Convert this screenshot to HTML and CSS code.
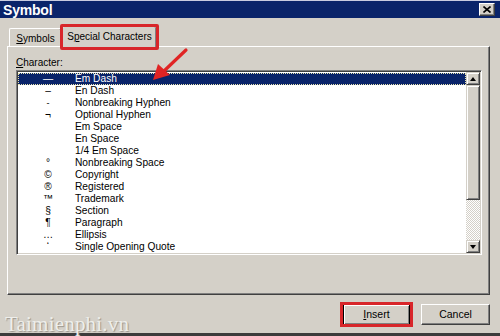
FILE: index.html
```html
<!DOCTYPE html>
<html>
<head>
<meta charset="utf-8">
<link rel="stylesheet" href="styles.css">
</head>
<body>
<div class="window">
  <div class="titlebar">
    <span class="title">Symbol</span>
    <span class="close"><svg width="8" height="7" viewBox="0 0 8 7"><path d="M0.5 0.5 L7.5 6.5 M7.5 0.5 L0.5 6.5" stroke="#000" stroke-width="1.6"/></svg></span>
  </div>
  <div class="content">
    <div class="tabs">
      <div class="tab"><u>S</u>ymbols</div>
      <div class="tab active">S<u>p</u>ecial Characters</div>
    </div>
    <div class="panel">
      <div class="label"><u>C</u>haracter:</div>
      <div class="listbox">
        <div class="rows">
          <div class="row sel"><span class="sym">—</span><span class="name">Em Dash</span></div>
          <div class="row"><span class="sym">–</span><span class="name">En Dash</span></div>
          <div class="row"><span class="sym small">-</span><span class="name">Nonbreaking Hyphen</span></div>
          <div class="row"><span class="sym">¬</span><span class="name">Optional Hyphen</span></div>
          <div class="row"><span class="sym"></span><span class="name">Em Space</span></div>
          <div class="row"><span class="sym"></span><span class="name">En Space</span></div>
          <div class="row"><span class="sym"></span><span class="name">1/4 Em Space</span></div>
          <div class="row"><span class="sym">°</span><span class="name">Nonbreaking Space</span></div>
          <div class="row"><span class="sym">©</span><span class="name">Copyright</span></div>
          <div class="row"><span class="sym">®</span><span class="name">Registered</span></div>
          <div class="row"><span class="sym">™</span><span class="name">Trademark</span></div>
          <div class="row"><span class="sym">§</span><span class="name">Section</span></div>
          <div class="row"><span class="sym">¶</span><span class="name">Paragraph</span></div>
          <div class="row"><span class="sym">…</span><span class="name">Ellipsis</span></div>
          <div class="row"><span class="sym">‘</span><span class="name">Single Opening Quote</span></div>
        </div>
        <div class="scrollbar">
          <div class="sbtn"><span class="tri up"></span></div>
          <div class="thumb"></div>
          <div class="track"></div>
          <div class="sbtn"><span class="tri down"></span></div>
        </div>
      </div>
    </div>
  </div>
  <div class="footer">
    <div class="btn default"><u>I</u>nsert</div>
    <div class="btn">Cancel</div>
  </div>
  <div class="strip"></div>
  <div class="watermark">Taimienphi.vn</div>
  <svg class="arrow" width="500" height="336" viewBox="0 0 500 336">
    <path d="M186 50 L164 71" stroke="#e02424" stroke-width="3.2" stroke-linecap="round"/>
    <polygon points="153,80 158,64 170,75" fill="#e02424"/>
  </svg>
</div>
</body>
</html>
```
FILE: styles.css
```css
* { box-sizing: border-box; }
html, body { margin: 0; padding: 0; }
body {
  width: 500px;
  height: 336px;
  overflow: hidden;
  font-family: "Liberation Sans", Arial, sans-serif;
  font-size: 10px;
  color: #000;
}
u { text-decoration: underline; text-underline-offset: 1px; }
.window {
  position: relative;
  width: 500px;
  height: 336px;
  background: #d4d0c8;
  display: flex;
  flex-direction: column;
}
.titlebar {
  height: 18px;
  background: #0a246a;
  border-top: 1px solid #c8cce0;
  display: flex;
  align-items: center;
  justify-content: space-between;
  padding: 0 5px 0 3px;
}
.title {
  color: #fff;
  font-weight: bold;
  font-size: 14px;
  letter-spacing: -0.2px;
}
.close {
  width: 16px;
  height: 13px;
  background: #d4d0c8;
  border: 1px solid;
  border-color: #fff #404040 #404040 #fff;
  box-shadow: inset -1px -1px #808080;
  display: flex;
  align-items: center;
  justify-content: center;
}
.content {
  padding: 6px 10px 0 7px;
}
.tabs {
  height: 22px;
  display: flex;
  align-items: flex-end;
  padding-left: 2px;
}
.tab {
  height: 18px;
  width: 53px;
  border: 1px solid;
  border-color: #fff #404040 transparent #fff;
  box-shadow: inset -1px 0 #808080;
  border-bottom: none;
  border-radius: 2px 2px 0 0;
  display: flex;
  align-items: center;
  justify-content: center;
  padding-top: 1px;
}
.tab.active {
  position: relative;
  height: 21px;
  width: 95px;
  padding-top: 0;
  padding-bottom: 2px;
  margin-bottom: -1px;
  background: #d4d0c8;
  z-index: 1;
}
.tab.active::after {
  content: "";
  position: absolute;
  left: -3px;
  right: -3px;
  top: -3px;
  bottom: -3px;
  border: 3px solid #d8262a;
  border-radius: 2px;
}
.panel {
  height: 249px;
  border: 1px solid;
  border-color: #fff #404040 #404040 #fff;
  box-shadow: inset -1px -1px #808080;
  padding: 10px 7px 0 8px;
}
.label {
  height: 12px;
  line-height: 12px;
  margin-bottom: 1px;
}
.listbox {
  height: 185px;
  border: 1px solid;
  border-color: #808080 #fff #fff #808080;
  box-shadow: inset 1px 1px #404040, inset -1px -1px #d4d0c8;
  background: #fff;
  padding: 1px;
  display: flex;
}
.rows {
  flex: 1;
  overflow: hidden;
  padding-top: 1px;
}
.row {
  height: 12px;
  line-height: 12px;
  display: grid;
  grid-template-columns: 57px 1fr;
  white-space: nowrap;
  color: #000;
  font-size: 10.2px;
}
.row.sel {
  background: #0a246a;
  color: #fff;
  outline: 1px dotted #e8e4b0;
  outline-offset: -1px;
}
.sym {
  text-align: center;
  padding-left: 3px;
}
.sym.small { font-size: 9px; }
.scrollbar {
  width: 14px;
  display: flex;
  flex-direction: column;
}
.sbtn {
  height: 13px;
  background: #d4d0c8;
  border: 1px solid;
  border-color: #d4d0c8 #404040 #404040 #d4d0c8;
  box-shadow: inset 1px 1px #fff, inset -1px -1px #808080;
  display: flex;
  align-items: center;
  justify-content: center;
}
.tri {
  width: 0;
  height: 0;
  border-left: 3.5px solid transparent;
  border-right: 3.5px solid transparent;
}
.tri.up { border-bottom: 4px solid #000; }
.tri.down { border-top: 4px solid #000; }
.thumb {
  height: 115px;
  background: #d4d0c8;
  border: 1px solid;
  border-color: #d4d0c8 #404040 #404040 #d4d0c8;
  box-shadow: inset 1px 1px #fff, inset -1px -1px #808080;
}
.track {
  flex: 1;
  background: repeating-conic-gradient(#fff 0 25%, #d4d0c8 0 50%) 0 0 / 2px 2px;
}
.footer {
  height: 38px;
  display: flex;
  align-items: center;
  justify-content: flex-end;
  gap: 11px;
  padding-right: 10px;
  font-size: 10.5px;
}
.btn {
  position: relative;
  width: 69px;
  height: 21px;
  border: 1px solid;
  border-color: #fff #404040 #404040 #fff;
  box-shadow: inset -1px -1px #808080;
  display: flex;
  align-items: center;
  justify-content: center;
}
.btn.default {
  width: 67px;
  border-color: #000;
  box-shadow: inset 1px 1px #fff, inset -1px -1px #808080;
}
.btn.default::after {
  content: "";
  position: absolute;
  left: -4px;
  right: -4px;
  top: -3px;
  bottom: -3px;
  border: 3px solid #d8262a;
}
.strip {
  height: 3px;
  background: #3c3c3c;
}
.watermark {
  position: absolute;
  left: 5px;
  top: 312px;
  font-family: "Liberation Serif", "Times New Roman", serif;
  font-size: 21px;
  letter-spacing: 0.2px;
  color: #eeeeea;
  text-shadow: 1px 1px 1px #9a968e;
}
.arrow {
  position: absolute;
  left: 0;
  top: 0;
  pointer-events: none;
}
```
